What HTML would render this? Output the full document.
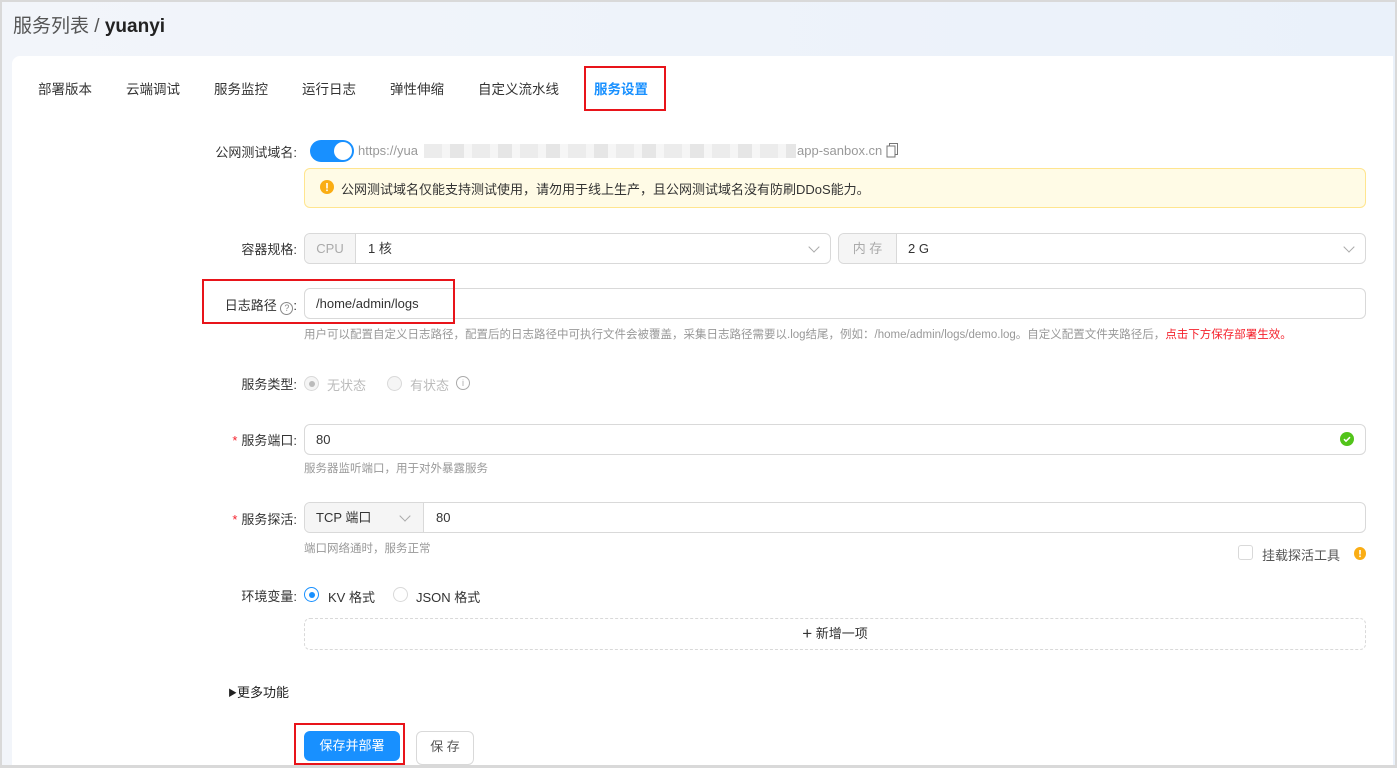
<!DOCTYPE html>
<html><head><meta charset="utf-8"><style>
*{box-sizing:border-box;margin:0;padding:0}
body{width:1397px;height:768px;overflow:hidden;background:#d9d9d9;font-family:"Liberation Sans","Noto Sans CJK SC",sans-serif;font-size:13px;color:#333;position:relative}
.frame{position:absolute;left:2px;top:2px;width:1393px;height:763px;background:linear-gradient(90deg,#f2f5fa,#eaf1fa);overflow:hidden}
.card{position:absolute;left:10px;top:54px;width:1381px;height:720px;background:#fff;border-radius:8px 0 0 0}
.a{position:absolute;white-space:nowrap}
.lbl{position:absolute;text-align:right;width:290px;left:0;color:#333}
.inp{position:absolute;border:1px solid #d9d9d9;border-radius:6px;background:#fff;height:31px;line-height:29px;padding-left:11px;color:#333}
.help{position:absolute;font-size:11.5px;color:#999;white-space:nowrap}
.red{position:absolute;border:2px solid #e8141a}
.addon{position:absolute;top:0;left:0;height:100%;background:#f5f5f5;border-right:1px solid #d9d9d9;color:#aaa;text-align:center}
.chev{position:absolute;width:8px;height:8px;border-right:1px solid #aaa;border-bottom:1px solid #aaa;transform:rotate(45deg)}
.radio{position:absolute;width:15px;height:15px;border-radius:50%;border:1px solid #d9d9d9;background:#fff}
.star{color:#f5222d;margin-right:4px}
</style></head><body>
<div class="frame">
<div class="a" style="left:11px;top:9px;font-size:19px;color:#555">服务列表 / <b style="color:#222;font-weight:bold">yuanyi</b></div>
<div class="card"></div>
</div>
<!-- tabs -->
<div class="a" style="left:38px;top:78px;font-size:13.5px">部署版本</div>
<div class="a" style="left:126px;top:78px;font-size:13.5px">云端调试</div>
<div class="a" style="left:214px;top:78px;font-size:13.5px">服务监控</div>
<div class="a" style="left:302px;top:78px;font-size:13.5px">运行日志</div>
<div class="a" style="left:390px;top:78px;font-size:13.5px">弹性伸缩</div>
<div class="a" style="left:478px;top:78px;font-size:13.5px">自定义流水线</div>
<div class="a" style="left:594px;top:78px;font-size:13.5px;color:#1890ff;font-weight:bold">服务设置</div>
<div class="red" style="left:584px;top:66px;width:82px;height:45px"></div>

<!-- domain -->
<div class="lbl" style="top:142px;width:297px">公网测试域名:</div>
<div class="a" style="left:310px;top:140px;width:44px;height:22px;border-radius:11px;background:#1890ff"><div style="position:absolute;right:2px;top:2px;width:18px;height:18px;border-radius:50%;background:#fff"></div></div>
<div class="a" style="left:358px;top:143px;color:#999">https://yua</div>
<div class="a" style="left:424px;top:144px;width:372px;height:14px;background:repeating-linear-gradient(90deg,#ececec 0 18px,#f5f5f5 18px 26px,#e6e6e6 26px 40px,#f6f6f6 40px 48px)"></div>
<div class="a" style="left:797px;top:143px;color:#999">app-sanbox.cn</div>
<svg class="a" style="left:886px;top:143px" width="13" height="15" viewBox="0 0 13 15"><rect x="3.5" y="0.5" width="8" height="11" fill="none" stroke="#777"/><rect x="1" y="3" width="8" height="11" fill="#fff" stroke="#777"/></svg>
<div class="a" style="left:304px;top:168px;width:1062px;height:40px;background:#fffbe6;border:1px solid #ffe58f;border-radius:6px"></div>
<svg class="a" style="left:320px;top:180px" width="14" height="14"><circle cx="7" cy="7" r="7" fill="#faad14"/><rect x="6.2" y="3" width="1.6" height="5.5" fill="#fff"/><rect x="6.2" y="9.5" width="1.6" height="1.6" fill="#fff"/></svg>
<div class="a" style="left:341px;top:179px">公网测试域名仅能支持测试使用，请勿用于线上生产，且公网测试域名没有防刷DDoS能力。</div>

<!-- spec -->
<div class="lbl" style="top:239px;width:297px">容器规格:</div>
<div class="inp" style="left:304px;top:233px;width:527px;padding-left:63px"><div class="addon" style="width:51px;border-radius:6px 0 0 6px">CPU</div>1 核<div class="chev" style="right:12px;top:9px"></div></div>
<div class="inp" style="left:838px;top:233px;width:528px;padding-left:69px"><div class="addon" style="width:58px;border-radius:6px 0 0 6px">内 存</div>2 G<div class="chev" style="right:12px;top:9px"></div></div>

<!-- log path -->
<div class="lbl" style="top:295px;width:297px">日志路径 <span style="display:inline-block;width:13px;height:13px;border:1px solid #888;border-radius:50%;font-size:9px;line-height:11px;text-align:center;color:#888;vertical-align:-1px">?</span>:</div>
<div class="inp" style="left:304px;top:288px;width:1062px">/home/admin/logs</div>
<div class="red" style="left:202px;top:279px;width:253px;height:45px"></div>
<div class="help" style="left:304px;top:326px">用户可以配置自定义日志路径，配置后的日志路径中可执行文件会被覆盖，采集日志路径需要以.log结尾，例如：/home/admin/logs/demo.log。自定义配置文件夹路径后，<span style="color:#f5222d">点击下方保存部署生效。</span></div>

<!-- type -->
<div class="lbl" style="top:374px;width:297px">服务类型:</div>
<div class="radio" style="left:304px;top:376px;background:#f5f5f5"><div style="position:absolute;left:3.5px;top:3.5px;width:6px;height:6px;border-radius:50%;background:#bbb"></div></div>
<div class="a" style="left:327px;top:375px;color:#bbb">无状态</div>
<div class="radio" style="left:387px;top:376px;background:#f5f5f5"></div>
<div class="a" style="left:410px;top:375px;color:#bbb">有状态</div>
<div class="a" style="left:456px;top:376px;width:14px;height:14px;border:1px solid #aaa;border-radius:50%;font-size:9px;line-height:12px;text-align:center;color:#aaa">i</div>

<!-- port -->
<div class="lbl" style="top:430px;width:297px"><span class="star">*</span>服务端口:</div>
<div class="inp" style="left:304px;top:424px;width:1062px">80</div>
<svg class="a" style="left:1340px;top:432px" width="14" height="14"><circle cx="7" cy="7" r="7" fill="#52c41a"/><path d="M4 7.2l2 2 4-4" stroke="#fff" stroke-width="1.5" fill="none"/></svg>
<div class="help" style="left:304px;top:460px">服务器监听端口，用于对外暴露服务</div>

<!-- probe -->
<div class="lbl" style="top:509px;width:297px"><span class="star">*</span>服务探活:</div>
<div class="inp" style="left:304px;top:502px;width:1062px;padding-left:131px"><div class="addon" style="width:119px;border-radius:6px 0 0 6px;color:#333;text-align:left;padding-left:11px">TCP 端口<div class="chev" style="right:14px;top:9px"></div></div>80</div>
<div class="help" style="left:304px;top:540px">端口网络通时，服务正常</div>
<div class="a" style="left:1238px;top:545px;width:15px;height:15px;border:1px solid #d9d9d9;border-radius:3px"></div>
<div class="a" style="left:1262px;top:545px;color:#555">挂载探活工具</div>
<svg class="a" style="left:1354px;top:547px" width="12" height="13"><ellipse cx="6" cy="6.5" rx="6" ry="6.5" fill="#faad14"/><rect x="5.2" y="3" width="1.6" height="4.5" fill="#fff"/><rect x="5.2" y="8.5" width="1.6" height="1.6" fill="#fff"/></svg>

<!-- env -->
<div class="lbl" style="top:586px;width:297px">环境变量:</div>
<div class="radio" style="left:304px;top:587px;border-color:#1890ff"><div style="position:absolute;left:3.5px;top:3.5px;width:6px;height:6px;border-radius:50%;background:#1890ff"></div></div>
<div class="a" style="left:328px;top:587px">KV 格式</div>
<div class="radio" style="left:393px;top:587px"></div>
<div class="a" style="left:416px;top:587px">JSON 格式</div>
<div class="a" style="left:304px;top:618px;width:1062px;height:32px;border:1px dashed #d9d9d9;border-radius:6px;text-align:center;line-height:30px"><span style="font-size:17px;vertical-align:-1px">+</span> 新增一项</div>

<div class="a" style="left:228px;top:682px;color:#222"><span style="font-size:9px;vertical-align:1px">▶</span>更多功能</div>

<div class="a" style="left:304px;top:731px;width:96px;height:30px;background:#1890ff;border-radius:6px;color:#fff;text-align:center;line-height:30px">保存并部署</div>
<div class="a" style="left:416px;top:731px;width:58px;height:34px;border:1px solid #d9d9d9;border-radius:6px;text-align:center;line-height:30px;color:#555">保 存</div>
<div class="red" style="left:294px;top:723px;width:111px;height:42px"></div>
<div class="a" style="left:0;top:765px;width:1397px;height:3px;background:#d9d9d9"></div>
</body></html>
